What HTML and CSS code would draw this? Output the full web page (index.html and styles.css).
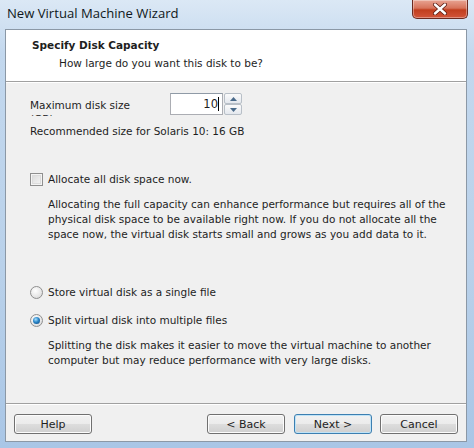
FILE: index.html
```html
<!DOCTYPE html>
<html>
<head>
<meta charset="utf-8">
<link rel="stylesheet" href="styles.css">
</head>
<body>
<div class="window">
  <div class="titlebar">
    <span class="title">New Virtual Machine Wizard</span>
    <div class="close">
      <svg width="16" height="12" viewBox="0 0 16 12"><path d="M3 1.5 L13 10.5 M13 1.5 L3 10.5" stroke="#5a1a10" stroke-width="4" stroke-linecap="round"/><path d="M3 1.5 L13 10.5 M13 1.5 L3 10.5" stroke="#ffffff" stroke-width="2.4" stroke-linecap="round"/></svg>
    </div>
  </div>
  <div class="client">
    <div class="header">
      <div class="h-title">Specify Disk Capacity</div>
      <div class="h-sub">How large do you want this disk to be?</div>
    </div>
    <div class="body">
      <div class="size-row">
        <div class="size-label">Maximum disk size<br>(GB):</div>
        <div class="spin">
          <div class="spin-input">10<span class="caret"></span></div>
          <div class="spin-btns">
            <div class="spin-btn"><svg width="7" height="4" viewBox="0 0 7 4"><path d="M0 4 L3.5 0 L7 4 Z" fill="#4a6a8a"/></svg></div>
            <div class="spin-btn"><svg width="7" height="4" viewBox="0 0 7 4"><path d="M0 0 L3.5 4 L7 0 Z" fill="#4a6a8a"/></svg></div>
          </div>
        </div>
      </div>
      <div class="recommend">Recommended size for Solaris 10: 16 GB</div>
      <div class="option check-opt">
        <span class="checkbox"></span>
        <span>Allocate all disk space now.</span>
      </div>
      <p class="desc">Allocating the full capacity can enhance performance but requires all of the physical disk space to be available right now. If you do not allocate all the space now, the virtual disk starts small and grows as you add data to it.</p>
      <div class="option radio-opt1">
        <span class="radio"></span>
        <span>Store virtual disk as a single file</span>
      </div>
      <div class="option radio-opt2">
        <span class="radio checked"><span class="dot"></span></span>
        <span>Split virtual disk into multiple files</span>
      </div>
      <p class="desc desc2">Splitting the disk makes it easier to move the virtual machine to another computer but may reduce performance with very large disks.</p>
    </div>
    <div class="footer">
      <button class="btn">Help</button>
      <div class="spacer"></div>
      <button class="btn">&lt; Back</button>
      <button class="btn default">Next &gt;</button>
      <button class="btn">Cancel</button>
    </div>
  </div>
</div>
</body>
</html>
```
FILE: styles.css
```css
html, body {
  margin: 0;
  padding: 0;
}
body {
  width: 474px;
  height: 448px;
  overflow: hidden;
  background: #b9d1ea;
}
.window {
  width: 474px;
  height: 448px;
  display: flex;
  flex-direction: column;
  background: linear-gradient(180deg, #dbe8f5 0%, #c3d8ee 12%, #b9d1ea 60%, #a9c6e6 100%);
  font-family: "DejaVu Sans", sans-serif;
  color: #1e1e1e;
}
.titlebar {
  height: 29px;
  flex: none;
  display: flex;
  align-items: flex-start;
  justify-content: space-between;
  padding-left: 7px;
  padding-right: 6px;
}
.title {
  font-family: "Open Sans", sans-serif;
  font-size: 13.1px;
  line-height: 19px;
  margin-top: 4px;
  color: #101820;
}
.close {
  width: 54px;
  height: 18px;
  border: 1px solid #6b2a20;
  border-top: none;
  border-radius: 0 0 5px 5px;
  background: linear-gradient(180deg, #e8a493 0%, #d7735b 45%, #c13e1e 55%, #d2553a 100%);
  display: flex;
  align-items: center;
  justify-content: center;
  box-shadow: inset 0 0 0 1px rgba(255,255,255,0.35);
}
.client {
  flex: 1;
  margin: 0 7px 6px 5px;
  border: 1px solid #8b98a6;
  background: #f0f0f0;
  display: flex;
  flex-direction: column;
}
.header {
  height: 52px;
  flex: none;
  background: #ffffff;
  border-bottom: 1px solid #a0a0a0;
  box-shadow: 0 1px 0 #ffffff;
  box-sizing: border-box;
  padding: 7px 0 0 26px;
  font-size: 10.5px;
}
.h-title {
  font-weight: bold;
  line-height: 16px;
}
.h-sub {
  padding-left: 27px;
  line-height: 16px;
  margin-top: 2px;
}
.body {
  flex: 1;
  padding: 11px 0 0 24px;
  font-size: 10.5px;
}
.size-row {
  display: flex;
  align-items: flex-start;
}
.size-label {
  width: 140px;
  height: 23px;
  overflow: hidden;
  line-height: 14px;
  padding-top: 5px;
  box-sizing: border-box;
}
.spin {
  display: flex;
}
.spin-input {
  width: 53px;
  height: 22px;
  box-sizing: border-box;
  border: 1px solid #abadb3;
  border-top-color: #8f9aa6;
  background: #fff;
  text-align: right;
  padding-right: 3px;
  line-height: 20px;
  font-size: 11.5px;
}
.caret {
  display: inline-block;
  width: 1px;
  height: 14px;
  background: #000;
  vertical-align: -3px;
}
.spin-btns {
  display: flex;
  flex-direction: column;
  width: 18px;
  height: 22px;
  margin-left: 1px;
}
.spin-btn {
  flex: 1;
  box-sizing: border-box;
  border: 1px solid #b8bfc7;
  border-radius: 2px;
  background: linear-gradient(180deg, #fbfbfb, #e4e8ee);
  display: flex;
  align-items: center;
  justify-content: center;
}
.recommend {
  margin-top: 7px;
  line-height: 16px;
}
.option {
  display: flex;
  align-items: center;
  line-height: 16px;
}
.check-opt {
  margin-top: 32px;
}
.checkbox {
  width: 13px;
  height: 13px;
  box-sizing: border-box;
  border: 1px solid #8f8f8f;
  background: linear-gradient(135deg, #d8d8d8, #f7f7f7);
  box-shadow: inset 0 0 0 1px #f4f4f4, inset 0 0 0 2px #dcdcdc;
  margin-right: 5px;
}
.desc {
  margin: 10px 0 0 18px;
  line-height: 15px;
  width: 420px;
}
.radio-opt1 {
  margin-top: 42px;
}
.radio-opt2 {
  margin-top: 12px;
}
.radio {
  width: 13px;
  height: 13px;
  box-sizing: border-box;
  border-radius: 50%;
  border: 1px solid #8f8f8f;
  background: radial-gradient(circle at 40% 35%, #ffffff 0%, #e6e6e6 60%, #cfcfcf 100%);
  margin-right: 5px;
  display: flex;
  align-items: center;
  justify-content: center;
}
.dot {
  width: 7px;
  height: 7px;
  border-radius: 50%;
  background: radial-gradient(circle at 40% 35%, #a8e0ff 0%, #2a86c8 45%, #0b3f78 100%);
}
.desc2 {
  margin-top: 10px;
}
.footer {
  height: 38px;
  flex: none;
  border-top: 1px solid #a0a0a0;
  box-shadow: inset 0 1px 0 #ffffff;
  box-sizing: border-box;
  display: flex;
  align-items: flex-start;
  padding: 10px 8px 0 8px;
}
.spacer {
  flex: 1;
}
.btn {
  width: 78px;
  height: 20px;
  box-sizing: border-box;
  border: 1px solid #707070;
  border-radius: 3px;
  background: linear-gradient(180deg, #f2f2f2 0%, #ebebeb 50%, #dddddd 51%, #cfcfcf 100%);
  box-shadow: inset 0 0 0 1px #fcfcfc;
  font-family: "DejaVu Sans", sans-serif;
  font-size: 11px;
  color: #1e1e1e;
  padding: 0;
  margin-left: 8px;
  line-height: 17px;
}
.btn:first-child {
  margin-left: 0;
}
.btn.default {
  border-color: #3c7fb1;
  box-shadow: inset 0 0 0 1px #bfe3f7;
  margin-left: 9px;
}
```
